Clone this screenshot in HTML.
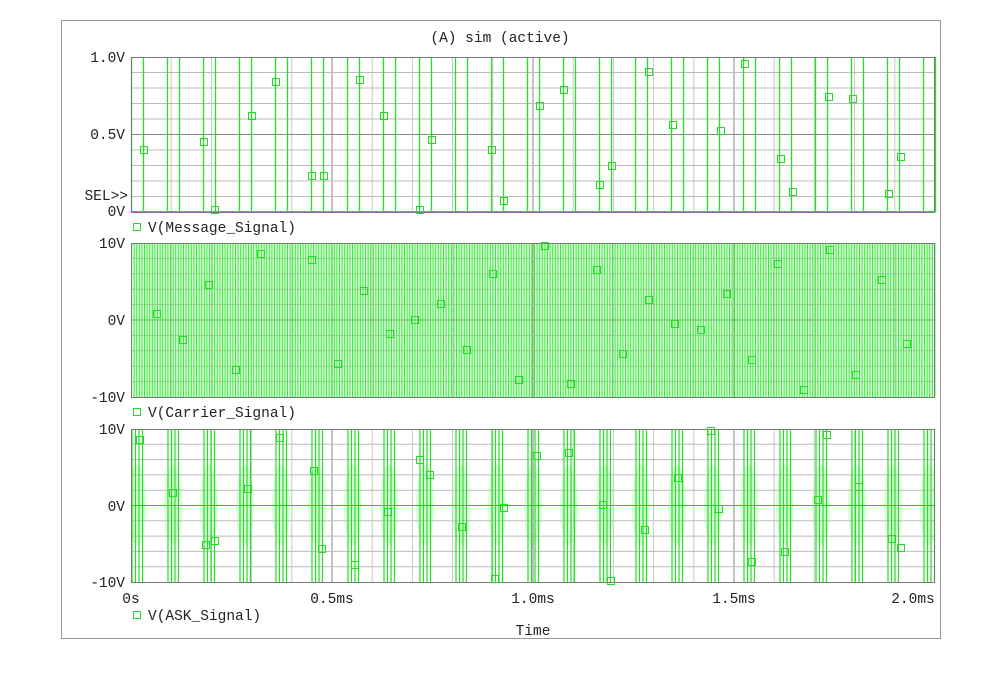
<!DOCTYPE html>
<html><head><meta charset="utf-8"><style>
html,body{margin:0;padding:0;background:#fff;width:1000px;height:680px;overflow:hidden}
svg{display:block}
text{font-family:"Liberation Mono",monospace;font-size:14.5px;fill:#222}
</style></head><body>
<svg id="s" width="1000" height="680" xmlns="http://www.w3.org/2000/svg">
<defs><clipPath id="c3"><rect x="131" y="429" width="804" height="153"/></clipPath></defs>
<rect x="61.5" y="20.5" width="879" height="618" fill="#fff" stroke="#999"/>
<g id="g"></g>
<text x="500" y="42" text-anchor="middle">(A) sim (active)</text>
<text x="125" y="62" text-anchor="end">1.0V</text>
<text x="125" y="139" text-anchor="end">0.5V</text>
<text x="128" y="200" text-anchor="end">SEL&gt;&gt;</text>
<text x="125" y="216" text-anchor="end">0V</text>
<text x="148" y="232">V(Message_Signal)</text>
<text x="125" y="248" text-anchor="end">10V</text>
<text x="125" y="325" text-anchor="end">0V</text>
<text x="125" y="402" text-anchor="end">-10V</text>
<text x="148" y="417">V(Carrier_Signal)</text>
<text x="125" y="434" text-anchor="end">10V</text>
<text x="125" y="511" text-anchor="end">0V</text>
<text x="125" y="587" text-anchor="end">-10V</text>
<text x="131" y="603" text-anchor="middle">0s</text>
<text x="332" y="603" text-anchor="middle">0.5ms</text>
<text x="533" y="603" text-anchor="middle">1.0ms</text>
<text x="734" y="603" text-anchor="middle">1.5ms</text>
<text x="913" y="603" text-anchor="middle">2.0ms</text>
<text x="148" y="620">V(ASK_Signal)</text>
<text x="533" y="635" text-anchor="middle">Time</text>
</svg>
<script>
var g=document.getElementById('g'),h='';
function L(x1,y1,x2,y2,c,w){h+='<line x1="'+x1+'" y1="'+y1+'" x2="'+x2+'" y2="'+y2+'" stroke="'+c+'" stroke-width="'+(w||1)+'"/>';}
function R(x,y){h+='<rect x="'+(x-3.5)+'" y="'+(y-3.5)+'" width="7" height="7" fill="none" stroke="#22dd22"/>';}
var X0=131,X1=935;
var P=[[57,212],[243,397],[429,582]];
h+='<rect x="131" y="243" width="804" height="154" fill="#d8ffd8"/>';
h+='<g clip-path="url(#c3)">';
for(var x=131;x<935;x+=36){h+='<ellipse cx="'+(x+6)+'" cy="505" rx="9" ry="40" fill="#d8ffd8"/>';}
h+='</g>';
P.forEach(function(p){var t=p[0],b=p[1],hh=b-t;
 for(var i=1;i<20;i++){var x=X0+i*(X1-X0)/20;L(x,t,x,b,i%5==0?'#888':'#c8c8c8');}
 for(var j=1;j<10;j++){var y=t+j*hh/10;L(X0,y,X1,y,j==5?'#888':'#bbb');}
});
for(var x=131;x<935;x+=36){L(x+.5,57,x+.5,212,'#22e022',1.3);L(x+12.5,57,x+12.5,212,'#22e022',1.3);}
L(131,57.5,935,57.5,'#22e022');L(131,211.5,935,211.5,'#22e022');
for(var x=131.5;x<935;x+=2.6){L(x,243,x,397,'#3ee83e');}
for(var x=131;x<935;x+=36){for(var k=0;k<4;k++)L(x+1+k*3.5,429,x+1+k*3.5,582,'#22e022',1.2);}
L(131,505.5,935,505.5,'#22cc22');
P.forEach(function(p){h+='<rect x="131.5" y="'+(p[0]+.5)+'" width="803" height="'+(p[1]-p[0])+'" fill="none" stroke="#777"/>';});
R(137,227);R(137,412);R(137,615);
var m=[[144,150],[204,142],[215,210],[252,116],[276,82],[312,176],[324,176],[360,80],[384,116],[420,210],[432,140],[492,150],[504,201],[540,106],[564,90],[600,185],[612,166],[649,72],[673,125],[721,131],[745,64],[781,159],[793,192],[829,97],[853,99],[889,194],[901,157],
[157,314],[183,340],[209,285],[236,370],[261,254],[312,260],[338,364],[364,291],[390,334],[415,320],[441,304],[467,350],[493,274],[519,380],[545,246],[571,384],[597,270],[623,354],[649,300],[675,324],[701,330],[727,294],[752,360],[778,264],[804,390],[830,250],[856,375],[882,280],[907,344],
[140,440],[173,493],[206,545],[215,541],[248,489],[280,438],[314,471],[322,549],[355,565],[388,512],[420,460],[430,475],[462,527],[495,579],[504,508],[537,456],[569,453],[603,505],[611,581],[645,530],[678,478],[711,431],[719,509],[752,562],[785,552],[818,500],[827,435],[859,487],[892,539],[901,548]];
m.forEach(function(p){R(p[0],p[1]);});
g.innerHTML=h;
</script>
</body></html>
